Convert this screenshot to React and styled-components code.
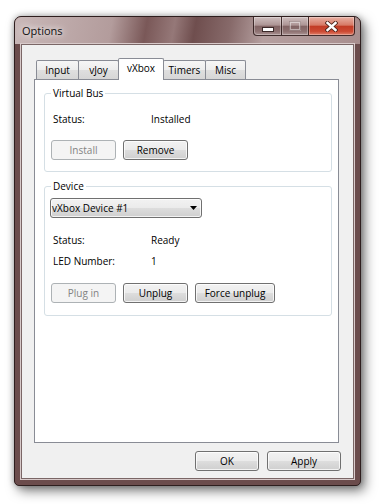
import React from "react";
import styled, { createGlobalStyle } from "styled-components";

const GlobalStyle = createGlobalStyle`
  html, body {
    margin: 0;
    padding: 0;
    background: #fff;
  }
  body {
    font-family: "Open Sans", "Noto Sans", sans-serif;
    font-size: 10px;
    color: #000;
  }
`;

const Page = styled.div`
  box-sizing: border-box;
  width: 385px;
  height: 504px;
  padding: 16px 0 0 14px;
  overflow: hidden;
`;

const Frame = styled.div`
  box-sizing: border-box;
  width: 347px;
  height: 470px;
  display: flex;
  flex-direction: column;
  padding: 0 6px 6px;
  border: 1px solid #2e1e1e;
  border-radius: 7px 7px 5px 5px;
  background: #6b4c4c;
  box-shadow: 4px 5px 12px rgba(0,0,0,0.5), 0 0 6px rgba(0,0,0,0.3);
`;

const TitleBar = styled.div`
  height: 27px;
  margin: 0 -6px;
  padding: 0 6px;
  display: flex;
  justify-content: space-between;
  align-items: flex-start;
  border-radius: 6px 6px 0 0;
  background: linear-gradient(100deg, #c9b8b8 0%, #b39c9c 28%, #7a5858 38%, #957878 46%, #6f4e4e 52%, #876a6a 62%, #b59f9f 72%, #a88e8e 100%);
`;

const Title = styled.div`
  padding-left: 1px;
  line-height: 27px;
  font-size: 11px;
  color: #111;
  text-shadow: 0 0 6px #fff, 0 0 10px rgba(255,255,255,0.8);
`;

const CaptionButtons = styled.div`
  display: flex;
  margin-right: -1px;
`;

const CaptionButton = styled.div`
  box-sizing: border-box;
  width: ${p => p.$w}px;
  height: 19px;
  margin-left: -1px;
  display: flex;
  align-items: center;
  justify-content: center;
  border: 1px solid rgba(50,30,30,0.9);
  border-top: none;
  background: ${p => p.$close
    ? "linear-gradient(#e8b0a4, #d77a66 45%, #c23c26 52%, #cc4a33 80%, #e0806a)"
    : "linear-gradient(#cfbfbf, #ad9595 45%, #826464 52%, #8e7272 80%, #ab9393)"};
  box-shadow: inset 0 0 0 1px rgba(255,255,255,0.3);

  &:first-child {
    margin-left: 0;
    border-bottom-left-radius: 4px;
  }
  &:last-child {
    border-bottom-right-radius: 4px;
  }
`;

const Client = styled.div`
  flex: 1;
  display: flex;
  flex-direction: column;
  padding: 13px 14px 0 12px;
  background: #f0f0f0;
  border: 1px solid #7a6666;
  box-shadow: 0 0 0 1px #d8caca;
`;

const TabStrip = styled.div`
  position: relative;
  z-index: 1;
  height: 21px;
  display: flex;
  align-items: flex-end;
  padding-left: 2px;
`;

const Tab = styled.div`
  box-sizing: border-box;
  width: ${p => p.$w}px;
  height: ${p => (p.$active ? 22 : 19)}px;
  margin: 0 0 ${p => (p.$active ? -1 : 0)}px -1px;
  padding-bottom: ${p => (p.$active ? 3 : 0)}px;
  display: flex;
  align-items: center;
  justify-content: center;
  line-height: 14px;
  border: 1px solid #898c95;
  border-bottom: none;
  border-radius: 2px 2px 0 0;
  background: ${p => (p.$active
    ? "#fff"
    : "linear-gradient(#f6f6f6, #ededed 50%, #dfdfdf 51%, #d6d6d6)")};
  position: relative;
  z-index: ${p => (p.$active ? 2 : 1)};

  &:first-child {
    margin-left: 0;
  }
`;

const Panel = styled.div`
  box-sizing: border-box;
  height: 364px;
  padding: 6px 6px 0 9px;
  border: 1px solid #898c95;
  background: #fff;
`;

const Group = styled.fieldset`
  min-width: 0;
  margin: ${p => p.$top || 0}px 0 0;
  padding: ${p => p.$pt}px 0 ${p => p.$pb}px 6px;
  border: 1px solid #d5dfe5;
  border-radius: 3px;
`;

const Legend = styled.legend`
  padding: 0 2px;
  line-height: 14px;
`;

const InfoRow = styled.div`
  display: grid;
  grid-template-columns: 98px auto;
  margin-top: ${p => p.$top || 0}px;
  padding-left: 2px;
  line-height: 14px;
`;

const ButtonRow = styled.div`
  display: flex;
  gap: 7px;
  margin-top: ${p => p.$top || 0}px;
`;

const Button = styled.button`
  box-sizing: border-box;
  width: ${p => p.$w}px;
  height: 20px;
  padding: 0;
  font: inherit;
  line-height: 14px;
  color: #000;
  border: 1px solid #707070;
  border-radius: 3px;
  background: linear-gradient(#f2f2f2 0%, #ebebeb 48%, #dddddd 52%, #cfcfcf 100%);
  box-shadow: inset 0 0 0 1px rgba(255,255,255,0.75);

  &:disabled {
    color: #838383;
    border-color: #adb2b5;
    background: #f4f4f4;
    box-shadow: none;
  }
`;

const Combo = styled.div`
  box-sizing: border-box;
  width: 152px;
  height: 20px;
  margin: ${p => p.$top || 0}px 0 0 -1px;
  padding: 0 4px 0 1px;
  display: flex;
  align-items: center;
  justify-content: space-between;
  line-height: 14px;
  border: 1px solid #707070;
  border-radius: 3px;
  background: linear-gradient(#f2f2f2 0%, #ebebeb 48%, #dddddd 52%, #cfcfcf 100%);
  box-shadow: inset 0 0 0 1px rgba(255,255,255,0.75);
`;

const DialogButtons = styled.div`
  display: flex;
  justify-content: flex-end;
  gap: 8px;
  margin: 8px -2px 0 0;
`;

function MinimizeGlyph() {
  return (
    <svg width="12" height="5" viewBox="0 0 12 5" style={{ marginTop: 7 }}>
      <rect x="0.5" y="0.5" width="11" height="4" fill="#fff" stroke="#3c2a2a" />
    </svg>
  );
}

function MaximizeGlyph() {
  return (
    <svg width="12" height="10" viewBox="0 0 12 10" style={{ opacity: 0.45 }}>
      <rect x="1" y="1" width="10" height="8" fill="none" stroke="#fff" strokeWidth="2" />
      <rect x="0.5" y="0.5" width="11" height="9" fill="none" stroke="#5a4545" strokeWidth="0.6" />
    </svg>
  );
}

function CloseGlyph() {
  const d = "M2.5 2 L10.5 9 M10.5 2 L2.5 9";
  return (
    <svg width="13" height="11" viewBox="0 0 13 11">
      <path d={d} stroke="#4a2219" strokeWidth="4.2" strokeLinecap="square" />
      <path d={d} stroke="#fff" strokeWidth="2.4" strokeLinecap="square" />
    </svg>
  );
}

function ComboArrow() {
  return (
    <svg width="7" height="4" viewBox="0 0 7 4">
      <path d="M0 0 H7 L3.5 4 Z" fill="#000" />
    </svg>
  );
}

const tabs = [
  { label: "Input", w: 43 },
  { label: "vJoy", w: 41 },
  { label: "vXbox", w: 46, active: true },
  { label: "Timers", w: 43 },
  { label: "Misc", w: 41 },
];

export default function App() {
  return (
    <Page>
      <GlobalStyle />
      <Frame>
        <TitleBar>
          <Title>Options</Title>
          <CaptionButtons>
            <CaptionButton $w={29}><MinimizeGlyph /></CaptionButton>
            <CaptionButton $w={28}><MaximizeGlyph /></CaptionButton>
            <CaptionButton $w={47} $close><CloseGlyph /></CaptionButton>
          </CaptionButtons>
        </TitleBar>
        <Client>
          <TabStrip>
            {tabs.map(t => (
              <Tab key={t.label} $w={t.w} $active={t.active}>{t.label}</Tab>
            ))}
          </TabStrip>
          <Panel>
            <Group $pt={12} $pb={11}>
              <Legend>Virtual Bus</Legend>
              <InfoRow>
                <span>Status:</span>
                <span>Installed</span>
              </InfoRow>
              <ButtonRow $top={14}>
                <Button $w={65} disabled>Install</Button>
                <Button $w={65}>Remove</Button>
              </ButtonRow>
            </Group>
            <Group $top={7} $pt={5} $pb={12}>
              <Legend>Device</Legend>
              <Combo>
                <span>vXbox Device #1</span>
                <ComboArrow />
              </Combo>
              <InfoRow $top={15}>
                <span>Status:</span>
                <span>Ready</span>
              </InfoRow>
              <InfoRow $top={7}>
                <span>LED Number:</span>
                <span>1</span>
              </InfoRow>
              <ButtonRow $top={15}>
                <Button $w={65} disabled>Plug in</Button>
                <Button $w={65}>Unplug</Button>
                <Button $w={80}>Force unplug</Button>
              </ButtonRow>
            </Group>
          </Panel>
          <DialogButtons>
            <Button $w={64}>OK</Button>
            <Button $w={74}>Apply</Button>
          </DialogButtons>
        </Client>
      </Frame>
    </Page>
  );
}
